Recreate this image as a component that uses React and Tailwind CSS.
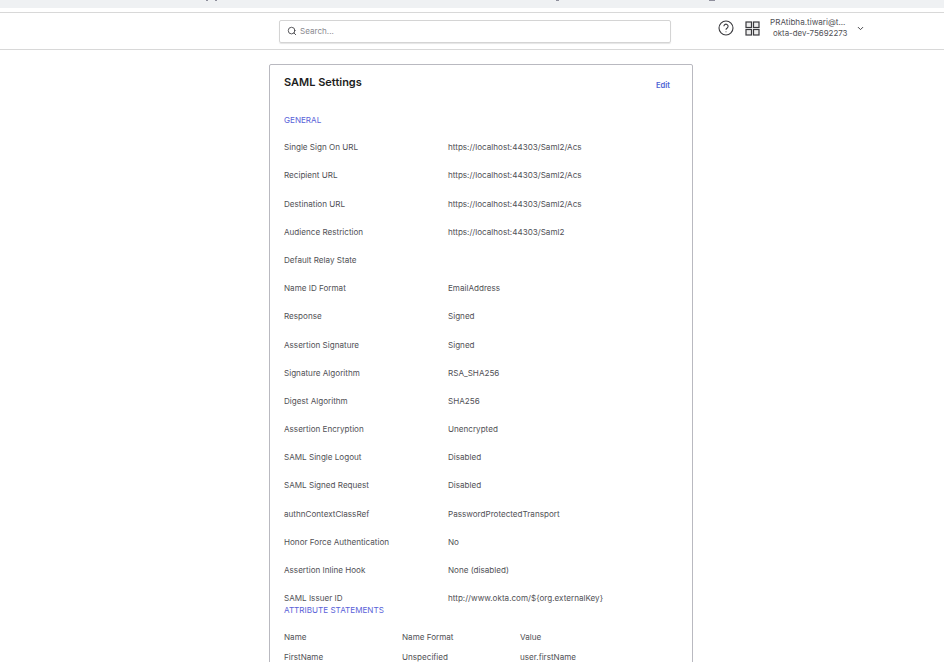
import React from 'react';
import { Search, ChevronDown } from 'lucide-react';

const settings = [
  ['Single Sign On URL', 'https://localhost:44303/Saml2/Acs'],
  ['Recipient URL', 'https://localhost:44303/Saml2/Acs'],
  ['Destination URL', 'https://localhost:44303/Saml2/Acs'],
  ['Audience Restriction', 'https://localhost:44303/Saml2'],
  ['Default Relay State', ''],
  ['Name ID Format', 'EmailAddress'],
  ['Response', 'Signed'],
  ['Assertion Signature', 'Signed'],
  ['Signature Algorithm', 'RSA_SHA256'],
  ['Digest Algorithm', 'SHA256'],
  ['Assertion Encryption', 'Unencrypted'],
  ['SAML Single Logout', 'Disabled'],
  ['SAML Signed Request', 'Disabled'],
  ['authnContextClassRef', 'PasswordProtectedTransport'],
  ['Honor Force Authentication', 'No'],
  ['Assertion Inline Hook', 'None (disabled)'],
];

const SettingRow = ({ label, value }) => (
  <div className="flex h-[28.2px] items-start">
    <div className="w-[164px] shrink-0">{label}</div>
    <div>{value}</div>
  </div>
);

const HelpIcon = () => (
  <svg width="16" height="16" viewBox="0 0 16 16" fill="none" stroke="#3a3a3e" strokeWidth="1.1">
    <circle cx="8" cy="8" r="7" />
    <path d="M5.9 6.3a2.1 2.1 0 1 1 3.3 1.7c-.8.5-1.2.9-1.2 1.8" />
    <circle cx="8" cy="11.8" r=".5" fill="#3a3a3e" stroke="none" />
  </svg>
);

const GridIcon = () => (
  <svg width="15" height="15" viewBox="0 0 15 15" fill="#eeeeee" stroke="#3a3a3e" strokeWidth="1.2">
    <rect x="1" y="1" width="5.5" height="5.5" />
    <rect x="8.5" y="1" width="5.5" height="5.5" />
    <rect x="1" y="8.5" width="5.5" height="5.5" />
    <rect x="8.5" y="8.5" width="5.5" height="5.5" />
  </svg>
);

export default function App() {
  return (
    <div className="relative h-[662px] overflow-hidden bg-white font-['Inter','Liberation_Sans',sans-serif] text-[8.1px] text-[#515156]">
      <div className="h-2 bg-[#eff1f3]" />
      {/* descender tips of the cropped line above */}
      <div className="absolute left-[206px] top-0 h-px w-[2px] bg-[#8f8f9c]" />
      <div className="absolute left-[215px] top-0 h-px w-[2px] bg-[#8f8f9c]" />
      <div className="absolute left-[556px] top-0 h-px w-[3px] bg-[#8f8f9c]" />
      <div className="absolute left-[709px] top-0 h-px w-[6px] bg-[#8f8f9c]" />

      <div className="mt-[4px] flex h-[38px] items-center border-y border-[#d8d8d8] pl-[279px]">
        <div className="flex h-[23px] w-[392px] shrink-0 items-center gap-[3px] rounded-[2px] border border-[#d4d4d4] pl-[7px] text-[#8a8a90] shadow-[0_1px_1px_#e5e5e5]">
          <Search size={10} strokeWidth={2} className="text-[#3a3a3e]" />
          <span>Search...</span>
        </div>
        <div className="mb-[6px] flex items-center">
          <div className="ml-[47px]">
            <HelpIcon />
          </div>
          <div className="ml-[11px]">
            <GridIcon />
          </div>
          <div className="ml-[10px] w-[77px] whitespace-nowrap leading-[11px]">
            <div>PRAtibha.tiwari@t...</div>
            <div className="pl-[3px] text-[7.9px]">okta-dev-75692273</div>
          </div>
          <ChevronDown size={9} strokeWidth={2.5} className="ml-[9px] text-[#3a3a3e]" />
        </div>
      </div>

      <div className="ml-[269px] mt-[14px] w-[424px] rounded-[2px] border border-[#b9b9c0] px-[14px] pb-8">
        <div className="flex items-start justify-between pr-[8px] pt-[10px]">
          <h2 className="text-[11px] font-semibold leading-[14px] text-[#1d1d21]">SAML Settings</h2>
          <a className="mt-[5px] text-[7.6px] font-semibold text-[#4c64d4]">Edit</a>
        </div>
        <div className="mt-[23px] h-[26.8px] text-[#5a62d8]">GENERAL</div>
        {settings.map(([label, value]) => (
          <SettingRow key={label} label={label} value={value} />
        ))}
        <div className="flex h-[12px] items-start">
          <div className="w-[164px] shrink-0">SAML Issuer ID</div>
          <div>{'http://www.okta.com/${org.externalKey}'}</div>
        </div>
        <div className="h-[26px] text-[#5a62d8]">ATTRIBUTE STATEMENTS</div>
        <div className="grid grid-cols-[118px_118px_1fr] gap-y-[8px] pt-[1px]">
          <div>Name</div>
          <div>Name Format</div>
          <div>Value</div>
          <div>FirstName</div>
          <div>Unspecified</div>
          <div>user.firstName</div>
        </div>
      </div>
    </div>
  );
}
